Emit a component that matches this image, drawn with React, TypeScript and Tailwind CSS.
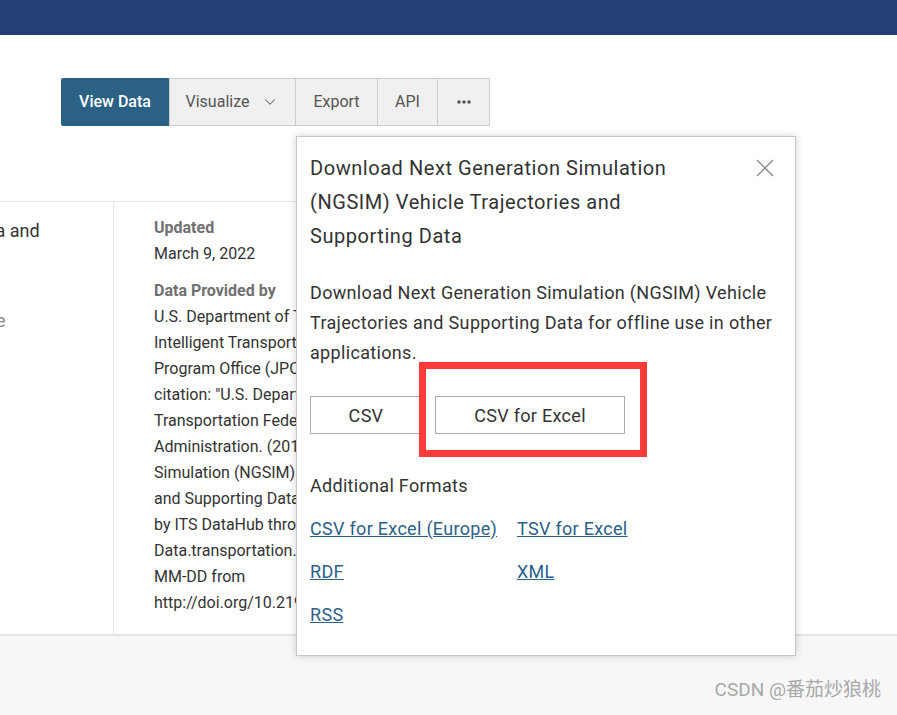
import React from "react";
import { ChevronDown } from "lucide-react";

const providedLines = [
  "U.S. Department of Transportation",
  "Intelligent Transportation Systems Joint",
  "Program Office (JPO). Recommended",
  'citation: "U.S. Department of',
  "Transportation Federal Highway",
  "Administration. (2016). Next Generation",
  "Simulation (NGSIM) Vehicle Trajectories",
  "and Supporting Data. [Dataset]. Provided",
  "by ITS DataHub through",
  "Data.transportation.gov. Accessed YYYY-",
  "MM-DD from",
  'http://doi.org/10.21949/1504477"',
];

function Toolbar() {
  return (
    <div className="ml-[61px] mt-[43px] flex h-[48px] text-[16px]">
      <button className="w-[108px] rounded-l-[2px] bg-[#2c6186] font-medium text-white">
        View Data
      </button>
      <button className="flex w-[127px] items-center justify-center gap-[12px] border border-[#cccccc] bg-[#f0f0f0] text-[#555]">
        Visualize
        <ChevronDown size={18} strokeWidth={1.4} className="text-[#666]" />
      </button>
      <button className="w-[82px] border border-l-0 border-[#cccccc] bg-[#f0f0f0] text-[#555]">
        Export
      </button>
      <button className="w-[60px] border border-l-0 border-[#cccccc] bg-[#f0f0f0] text-[#555]">
        API
      </button>
      <button className="flex w-[52px] items-center justify-center border border-l-0 border-[#cccccc] bg-[#f0f0f0]">
        <svg width="14" height="4" viewBox="0 0 14 4" className="text-[#555]">
          <circle cx="2" cy="2" r="1.8" fill="currentColor" />
          <circle cx="7" cy="2" r="1.8" fill="currentColor" />
          <circle cx="12" cy="2" r="1.8" fill="currentColor" />
        </svg>
      </button>
    </div>
  );
}

function DownloadPopup() {
  return (
    <div className="absolute left-[296px] top-[136px] h-[520px] w-[500px] border border-[#c9c9c9] bg-white px-[13px] pt-[14px] text-[#333] shadow-[0_0_8px_rgba(0,0,0,0.18)]">
      <div className="flex justify-between">
        <h2 className="w-[390px] text-[20px] leading-[34px] tracking-[0.55px]">
          Download Next Generation Simulation (NGSIM) Vehicle Trajectories and
          Supporting Data
        </h2>
        <button className="mr-[8px] mt-[8px] self-start">
          <svg width="18" height="18" viewBox="0 0 18 18">
            <path d="M1 1L17 17M17 1L1 17" stroke="#8a8a8a" strokeWidth="1.4" fill="none" />
          </svg>
        </button>
      </div>

      <p className="mt-[25px] text-[18px] leading-[30px] tracking-[0.33px]">
        Download Next Generation Simulation (NGSIM) Vehicle Trajectories and
        Supporting Data for offline use in other applications.
      </p>

      <div className="mt-[28px] flex gap-[13px] text-[18px] tracking-[0.3px]">
        <button className="h-[38px] w-[112px] border border-[#aaaaaa] bg-white">CSV</button>
        <button className="h-[38px] w-[190px] border border-[#aaaaaa] bg-white">CSV for Excel</button>
      </div>

      <div className="mt-[37px] text-[18px] leading-[30px] tracking-[0.3px]">Additional Formats</div>

      <div className="mt-[13px] grid grid-cols-[207px_auto] gap-y-[13px] text-[18px] leading-[30px] tracking-[0.3px] text-[#2c5f8a]">
        <a className="underline">CSV for Excel (Europe)</a>
        <a className="underline">TSV for Excel</a>
        <a className="underline">RDF</a>
        <a className="underline">XML</a>
        <a className="underline">RSS</a>
      </div>

      {/* red highlight from the screenshot */}
      <div className="absolute left-[122px] top-[225px] h-[95px] w-[228px] border-[7px] border-[#fb3a3a]" />
    </div>
  );
}

export default function App() {
  return (
    <div
      className="relative flex h-[715px] w-[897px] flex-col overflow-hidden bg-white"
      style={{ fontFamily: "Roboto, 'Noto Sans CJK SC', sans-serif" }}
    >
      <div className="h-[35px] shrink-0 bg-[#263f77]" />

      <Toolbar />

      <div className="mt-[75px] flex h-[433px] w-[790px] border-t border-[#e8e8e8]">
        <div className="w-[114px] shrink-0 overflow-hidden border-r border-[#e6e6e6] pt-[16px]">
          <div className="-ml-[32px] whitespace-nowrap text-[18px] leading-[26px] text-[#333]">
            Data and
          </div>
          <div className="-ml-[36px] mt-[64px] whitespace-nowrap text-[18px] leading-[26px] text-[#888]">
            More
          </div>
        </div>
        <div className="pl-[40px] pt-[13px] text-[16px] leading-[26px] text-[#333]">
          <div className="font-bold text-[#707070]">Updated</div>
          <div>March 9, 2022</div>
          <div className="mt-[11px] font-bold text-[#707070]">Data Provided by</div>
          {providedLines.map((line) => (
            <div key={line} className="whitespace-nowrap">
              {line}
            </div>
          ))}
        </div>
      </div>

      <div className="relative flex-1 border-t-2 border-[#e4e4e4] bg-[#f7f7f7]">
        <div className="absolute bottom-[11px] right-[16px] text-[19px] text-[#a8a8a8]">
          CSDN @番茄炒狼桃
        </div>
      </div>

      <DownloadPopup />
    </div>
  );
}
